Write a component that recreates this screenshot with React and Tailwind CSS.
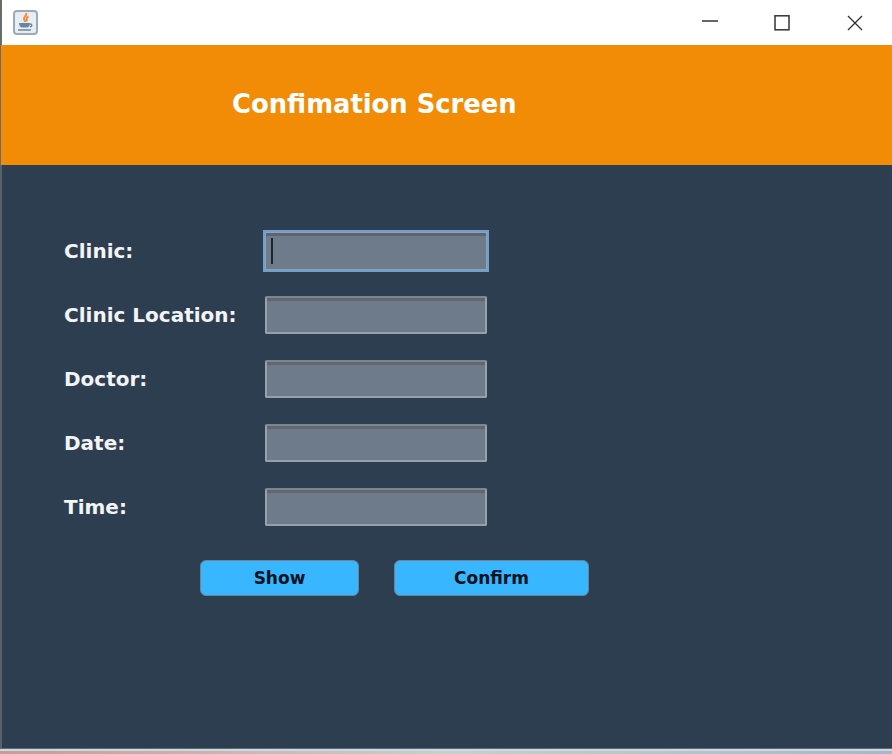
import React from 'react';

const fields = ['Clinic:', 'Clinic Location:', 'Doctor:', 'Date:', 'Time:'];

function JavaIcon() {
    return (
        <div className="w-[25px] h-[25px] rounded-[4px] border-2 border-[#9aabbb] bg-[#e9edf1] flex items-center justify-center">
            <svg width="21" height="21" viewBox="0 0 21 21" fill="none">
                <path d="M11 1c1.500 2.500-2.500 3.500-2 6 .2 1 1 1.500 1 3M13.500 4.500c-2 1-2.500 2.500-1.500 5" stroke="#ee8f45" strokeWidth="2" />
                <path d="M4 11h11c0 3-1.500 4-2.500 4.500h-6C5.500 15 4 14 4 11z" fill="#6a87a1" />
                <path d="M15 12c2.500 0 2.500 2.500 0 3M3 18h13" stroke="#6a87a1" strokeWidth="1.400" />
            </svg>
        </div>
    );
}

function TitleBar() {
    return (
        <div className="h-[45px] bg-white flex items-center pl-[11px] pr-[29px] border-l-2 border-[#6b6b6b]">
            <JavaIcon />
            <div className="ml-auto flex items-center gap-[56px] text-[#333]">
                <svg width="16" height="16" viewBox="0 0 16 16"><path d="M0 6h16" stroke="currentColor" strokeWidth="1.500" /></svg>
                <svg width="16" height="16" viewBox="0 0 16 16" fill="none"><rect x="1" y="0.800" width="14" height="14" stroke="currentColor" strokeWidth="1.500" /></svg>
                <svg className="ml-px" width="16" height="16" viewBox="0 0 16 16"><path d="M1 1l14 14M15 1L1 15" stroke="currentColor" strokeWidth="1.400" /></svg>
            </div>
        </div>
    );
}

function Field({ focused }) {
    if (focused) {
        return (
            <div className="w-[226px] h-[42px] -ml-[2px] border-2 border-[#6f9fcf]">
                <div className="h-full border border-[#94a0ac] bg-[#6e7b8a]">
                    <div className="h-[3px] bg-[#5b6571]" />
                    <div className="w-[2px] h-[26px] mt-[2px] ml-[5px] bg-[#1b2530]" />
                </div>
            </div>
        );
    }
    return (
        <div className="w-[222px] h-[38px] border-2 border-[#98a1ab] border-t-[#7d858d] rounded-[2px] bg-[#6e7b8a]">
            <div className="h-[3px] bg-[#5f6871]" />
        </div>
    );
}

export default function App() {
    return (
        <div className="w-[892px] h-[754px] overflow-hidden flex flex-col bg-[#2d3e50] font-['DejaVu_Sans',sans-serif] font-bold">
            <TitleBar />
            <div className="h-[120px] shrink-0 bg-[#f28c06] border-l border-[#6b6b6b] flex items-center pl-[231px] pb-px text-white text-[25.800px] leading-none">
                Confimation Screen
            </div>
            <div className="flex-1 border-l-2 border-[#55626e] pl-[62px] pt-[67px] flex flex-col">
                <div className="flex flex-col gap-[26px]">
                    {fields.map((label, i) => (
                        <div key={label} className="h-[38px] flex items-center">
                            <div className="w-[201px] text-[#f2f4f6] text-[20px] leading-none">{label}</div>
                            <Field focused={i === 0} />
                        </div>
                    ))}
                </div>
                <div className="flex gap-[35px] mt-[34px] ml-[136px]">
                    <button className="w-[159px] h-[36px] pt-[2px] rounded-[6px] border border-[#6d8295] bg-[#38b6ff] text-[#06121c] text-[17px]">Show</button>
                    <button className="w-[195px] h-[36px] pt-[2px] rounded-[6px] border border-[#6d8295] bg-[#38b6ff] text-[#06121c] text-[17px]">Confirm</button>
                </div>
            </div>
            <div className="h-px shrink-0 bg-[#4d7286]" />
            <div className="h-[2px] shrink-0 bg-[#d4d6d8]" />
            <div className="h-[3px] shrink-0 bg-linear-to-r from-[#c99a9c] via-[#c6cfcb] to-[#aab6c8]" />
        </div>
    );
}
